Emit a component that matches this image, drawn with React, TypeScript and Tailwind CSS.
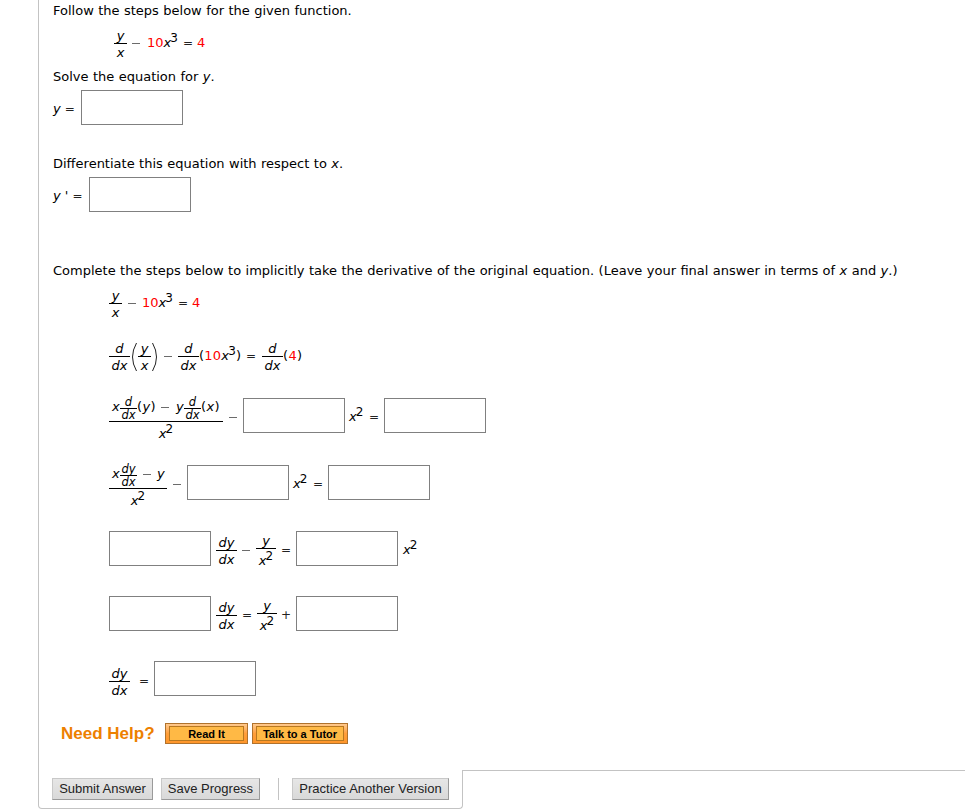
import type { ReactNode } from "react";
import clsx from "clsx";

type Props = { className?: string; children?: ReactNode };

const HELP = [
  { label: "Read It", width: "w-[83px]" },
  { label: "Talk to a Tutor", width: "w-[96px]" },
];

function Row({ className, children }: Props) {
  return <div className={clsx("flex items-start shrink-0", className)}>{children}</div>;
}

function Sym({ className, children }: Props) {
  return <span className={clsx("shrink-0 whitespace-nowrap", className)}>{children}</span>;
}

function Minus({ className }: Props) {
  return <span className={clsx("shrink-0 w-[8px] h-px bg-[#6b6b6b]", className)} />;
}

function Op({ children }: Props) {
  return <span className="text-[12px] text-[#222]">{children}</span>;
}

function Sup({ children }: Props) {
  return <span className="relative top-[-5px] -ml-px not-italic text-[12px] leading-none">{children}</span>;
}

function Squared() {
  return <i>x<Sup>2</Sup></i>;
}

// numerator, 1px bar, denominator: the bar is 15px below the top
function Frac({ num, den, className, low }: { num: ReactNode; den: ReactNode; className?: string; low?: boolean }) {
  return (
    <span className={clsx("shrink-0 flex flex-col text-center italic whitespace-nowrap", className)}>
      <span className="h-[15px]">{num}</span>
      <span className="h-px bg-black" />
      <span className={low ? "pt-[4px]" : "pt-px"}>{den}</span>
    </span>
  );
}

function SmallFrac({ num }: { num: string }) {
  return (
    <span className="shrink-0 w-[17px] flex flex-col text-center italic text-[11.5px] leading-[12px]">
      <span className="h-[12px]">{num}</span>
      <span className="h-px bg-black" />
      <span>dx</span>
    </span>
  );
}

function Answer({ className }: Props) {
  return <input type="text" className={clsx("shrink-0 w-[102px] h-[35px] border border-[#808080] bg-white outline-none", className)} />;
}

function GrayButton({ className, children }: Props) {
  return (
    <button className={clsx("h-[22px] border border-t-[#c8c8c8] border-l-[#c8c8c8] border-r-[#9a9a9a] border-b-[#9a9a9a] bg-linear-to-b from-[#e6e6e6] to-[#d9d9d9] text-[13px] leading-[20px] text-[#222] whitespace-nowrap", className)}>
      {children}
    </button>
  );
}

export default function App() {
  return (
    <div className="w-[965px] h-[810px] overflow-hidden bg-white text-black font-['DejaVu_Sans',sans-serif] text-[13px] leading-[16px]">
      <div className="ml-[38px] h-[770px] border-l border-[#c3c3c3] pl-[14px] flex flex-col">
        <Row className="h-[22px] pt-[3px] [word-spacing:0.3px]">
          <Sym>Follow the steps below for the given function.</Sym>
        </Row>
        <Row className="h-[46px] pl-[61px]">
          <Frac className="mt-[6px] w-[13px]" num="y" den="x" />
          <Minus className="mt-[21px] ml-[5px]" />
          <Sym className="mt-[13px] ml-[7px] w-[36px]"><span className="text-[#ff0000]">10</span><i>x</i><Sup>3</Sup></Sym>
          <Sym className="mt-[13px] w-[14px]"><Op>=</Op></Sym>
          <Sym className="mt-[13px] text-[#ff0000]">4</Sym>
        </Row>
        <Row className="h-[20px] pt-px [word-spacing:0.3px]">
          <Sym>Solve the equation for <i>y</i>.</Sym>
        </Row>
        <Row className="h-[62px]">
          <Sym className="mt-[13px] w-[28px]"><i>y</i> <Op>=</Op></Sym>
          <Answer className="mt-[2px]" />
        </Row>
        <Row className="h-[25px] pt-[6px] [word-spacing:0.3px]">
          <Sym>Differentiate this equation with respect to <i>x</i>.</Sym>
        </Row>
        <Row className="h-[80px]">
          <Sym className="mt-[13px] w-[36px]"><i>y</i> ' <Op>=</Op></Sym>
          <Answer className="mt-[2px]" />
        </Row>
        <Row className="h-[35px] pt-[8px] [word-spacing:0.3px]">
          <Sym>Complete the steps below to implicitly take the derivative of the original equation. (Leave your final answer in terms of <i>x</i> and <i>y</i>.)</Sym>
        </Row>
        <Row className="h-[45px] pl-[56px]">
          <Frac className="-mt-[2px] w-[13px]" num="y" den="x" />
          <Minus className="mt-[13px] ml-[6px]" />
          <Sym className="mt-[5px] ml-[6px] w-[36px]"><span className="text-[#ff0000]">10</span><i>x</i><Sup>3</Sup></Sym>
          <Sym className="mt-[5px] w-[14px]"><Op>=</Op></Sym>
          <Sym className="mt-[5px] text-[#ff0000]">4</Sym>
        </Row>
        <Row className="h-[55px] pl-[56px]">
          <Frac className="mt-[6px] w-[21px]" num="d" den="dx" />
          <svg className="mt-[7px] w-[8px] h-[30px]" viewBox="0 0 8 30" fill="none" stroke="#222">
            <path d="M6.500 1 Q-1.500 15 6.500 29" />
          </svg>
          <Frac className="mt-[6px] w-[13px]" num="y" den="x" />
          <svg className="mt-[7px] w-[8px] h-[30px]" viewBox="0 0 8 30" fill="none" stroke="#222">
            <path d="M1.500 1 Q9.500 15 1.500 29" />
          </svg>
          <Minus className="mt-[21px] ml-[5px]" />
          <Frac className="mt-[6px] ml-[6px] w-[21px]" num="d" den="dx" />
          <Sym className="mt-[13px] w-[47px] tracking-[0.2px]">(<span className="text-[#ff0000]">10</span><i>x</i><Sup>3</Sup>)</Sym>
          <Sym className="mt-[13px] w-[16px]"><Op>=</Op></Sym>
          <Frac className="mt-[6px] w-[21px]" num="d" den="dx" />
          <Sym className="mt-[13px] tracking-[0.3px]">(<span className="text-[#ff0000]">4</span>)</Sym>
        </Row>
        <Row className="h-[70px] pl-[56px]">
          <span className="shrink-0 w-[114px] flex flex-col">
            <span className="h-[31px] pl-[3px] flex items-start">
              <Sym className="mt-[9px] w-[8px]"><i>x</i></Sym>
              <span className="mt-[6px] flex"><SmallFrac num="d" /></span>
              <Sym className="mt-[9px] w-[24px] tracking-[0.3px]">(<i>y</i>)</Sym>
              <Minus className="mt-[17px]" />
              <Sym className="mt-[9px] ml-[7px] w-[8px]"><i>y</i></Sym>
              <span className="mt-[6px] flex"><SmallFrac num="d" /></span>
              <Sym className="mt-[9px] tracking-[0.3px]">(<i>x</i>)</Sym>
            </span>
            <span className="h-px bg-black" />
            <span className="pt-[4px] text-center"><Squared /></span>
          </span>
          <Minus className="mt-[27px] ml-[6px]" />
          <Answer className="mt-[8px] ml-[6px]" />
          <Sym className="mt-[19px] ml-[4px] w-[20px]"><Squared /></Sym>
          <Sym className="mt-[19px] w-[15px]"><Op>=</Op></Sym>
          <Answer className="mt-[8px]" />
        </Row>
        <Row className="h-[65px] pl-[56px]">
          <span className="shrink-0 w-[58px] flex flex-col">
            <span className="h-[28px] pl-[3px] flex items-start">
              <Sym className="mt-[6px] w-[8px]"><i>x</i></Sym>
              <span className="mt-[3px] flex"><SmallFrac num="dy" /></span>
              <Minus className="mt-[14px] ml-[6px]" />
              <Sym className="mt-[6px] ml-[6px]"><i>y</i></Sym>
            </span>
            <span className="h-px bg-black" />
            <span className="pt-[4px] text-center"><Squared /></span>
          </span>
          <Minus className="mt-[24px] ml-[6px]" />
          <Answer className="mt-[5px] ml-[6px]" />
          <Sym className="mt-[16px] ml-[4px] w-[20px]"><Squared /></Sym>
          <Sym className="mt-[16px] w-[15px]"><Op>=</Op></Sym>
          <Answer className="mt-[5px]" />
        </Row>
        <Row className="h-[65px] pl-[56px]">
          <Answer className="mt-[6px]" />
          <Frac className="mt-[10px] ml-[5px] w-[21px]" num="dy" den="dx" />
          <Minus className="mt-[25px] ml-[5px]" />
          <Frac low className="mt-[8px] ml-[6px] w-[20px]" num="y" den={<Squared />} />
          <Sym className="mt-[17px] ml-[5px] w-[15px]"><Op>=</Op></Sym>
          <Answer className="mt-[6px]" />
          <Sym className="mt-[17px] ml-[5px]"><Squared /></Sym>
        </Row>
        <Row className="h-[65px] pl-[56px]">
          <Answer className="mt-[6px]" />
          <Frac className="mt-[10px] ml-[5px] w-[21px]" num="dy" den="dx" />
          <Sym className="mt-[17px] ml-[5px] w-[15px]"><Op>=</Op></Sym>
          <Frac low className="mt-[8px] w-[20px]" num="y" den={<Squared />} />
          <Sym className="mt-[17px] ml-[4px] w-[15px]"><Op>+</Op></Sym>
          <Answer className="mt-[6px]" />
        </Row>
        <Row className="h-[60px] pl-[56px]">
          <Frac className="mt-[11px] w-[21px]" num="dy" den="dx" />
          <Sym className="mt-[18px] ml-[9px] w-[15px]"><Op>=</Op></Sym>
          <Answer className="mt-[6px]" />
        </Row>
        <Row className="h-[55px] pt-[8px] pl-[8px]">
          <span className="w-[104px] text-[17px] leading-[21px] font-bold text-[#ed8000] font-['Liberation_Sans',sans-serif] whitespace-nowrap">Need Help?</span>
          <div className="flex gap-[4px]">
            {HELP.map((b) => (
              <button key={b.label} className={clsx("h-[21px] px-[3px] border border-[#b0722c] bg-linear-to-b from-[#ffc98c] via-[#ff9f3a] to-[#ff962a] font-['Liberation_Sans',sans-serif]", b.width)}>
                <span className="block h-[15px] border border-[#b87820] bg-[#ffb945] text-[11px] leading-[14px] font-bold whitespace-nowrap">{b.label}</span>
              </button>
            ))}
          </div>
        </Row>
      </div>
      {/* Submission tab */}
      <div className="ml-[38px] h-[39px] flex">
        <div className="w-[425px] shrink-0 h-[39px] border-l border-r border-b border-[#c3c3c3] rounded-b-[4px] pt-[8px] pl-[13px] flex font-['Liberation_Sans',sans-serif]">
          <GrayButton className="w-[101px]">Submit Answer</GrayButton>
          <GrayButton className="w-[99px] ml-[8px]">Save Progress</GrayButton>
          <span className="w-px h-[22px] ml-[18px] bg-[#c3c3c3]" />
          <GrayButton className="w-[157px] ml-[13px]">Practice Another Version</GrayButton>
        </div>
        <div className="flex-1 h-px bg-[#c3c3c3]" />
      </div>
    </div>
  );
}
